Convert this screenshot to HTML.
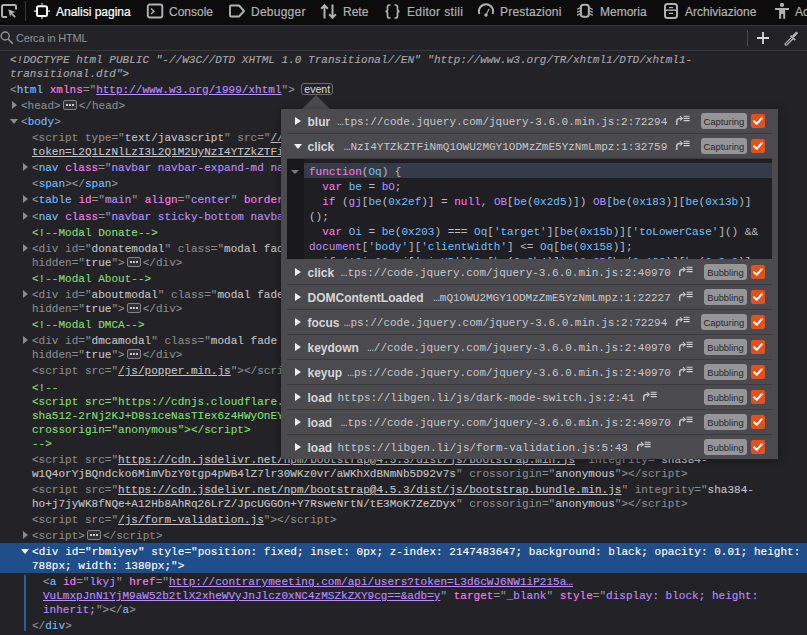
<!DOCTYPE html>
<html><head><meta charset="utf-8">
<style>
*{margin:0;padding:0;box-sizing:border-box}
html,body{width:807px;height:635px;overflow:hidden;background:#232327}
body{position:relative;font-family:"Liberation Sans",sans-serif}
#tb{position:absolute;left:0;top:0;width:807px;height:25px;background:#0c0c0d}
#tbline{position:absolute;left:0;top:25px;width:807px;height:1px;background:#38383d}
.tab{position:absolute;top:0;height:25px;line-height:25px;font-size:12px;color:#b1b1b3;white-space:nowrap;-webkit-text-stroke:0.2px currentColor}
.tab.sel{color:#fff}
.ico{position:absolute;top:0}
#sb{position:absolute;left:0;top:26px;width:807px;height:24px;background:#232327}
#sbline{position:absolute;left:0;top:50px;width:807px;height:1px;background:#38383d}
#search{position:absolute;left:16px;top:26px;height:24px;line-height:24px;font-size:11px;letter-spacing:-0.2px;color:#939395}
#tree{position:absolute;left:0;top:0;width:807px;height:635px;font-family:"Liberation Mono",monospace;font-size:11px;-webkit-text-stroke:0.12px currentColor;letter-spacing:0.022px}
.node{position:absolute;left:0;width:807px}
.selbg{position:absolute;left:0;top:543px;width:807px;height:30px;background:#204e8a}
.ln{position:absolute;height:14px;line-height:14px;white-space:pre;color:#939395}
.p{color:#939395}.t{color:#75bfff}.a{color:#ff7de9}.v{color:#b98eff}.c{color:#86de74}
.u{text-decoration:underline}
.dt{color:#a8a8ab;font-style:italic}
.dim .p,.dim .t,.dim .a{color:#8a8a8e}
.dim .v{color:#c2c2c6}
.sel .p,.sel .t,.sel .a,.sel .v{color:#fff}
.tw{position:absolute;top:4px;width:0;height:0}
.tw.r{border-top:4px solid transparent;border-bottom:4px solid transparent;border-left:5px solid #8a8a8e;top:3px;margin-left:2px}
.tw.d{border-left:4px solid transparent;border-right:4px solid transparent;border-top:5px solid #8a8a8e;top:5px;margin-left:0px}
.sel .tw.d{border-top-color:#fff}
.dots{display:inline-block;position:relative;width:14px;height:10px;border:1px solid #838387;border-radius:2px;vertical-align:0px;top:1px;margin:0 2px 0 2px;background:#313136}
.dots i{position:absolute;top:3px;width:2.2px;height:2.2px;background:#c8c8cc}
.dots i:nth-child(1){left:2px}.dots i:nth-child(2){left:5px}.dots i:nth-child(3){left:8px}
.evt{display:inline-block;position:relative;font-family:"Liberation Sans",sans-serif;font-size:10.5px;color:#d0d0d4;border:1px solid #6e6e72;border-radius:3px;height:12px;line-height:10px;padding:0 2px 0 2.5px;vertical-align:0px;top:0px;left:-0.6px}
#vline{position:absolute;left:24px;top:575px;width:2px;height:56px;background:#2a5da0}
/* popup */
#arrow{position:absolute;left:301.5px;top:95px;width:0;height:0;border-left:14px solid transparent;border-right:14px solid transparent;border-bottom:14px solid #4a4a4f}
#pop{position:absolute;left:281px;top:109px;width:497px;height:350px;background:#4a4a4f;border-left:1px solid #4a4a4f;box-shadow:0 1px 8px rgba(0,0,0,0.35);font-family:"Liberation Sans",sans-serif}
.row{position:absolute;left:0;width:497px;height:25px}
.rsep{position:absolute;left:5px;top:24px;width:485px;height:1px;background:#3a3a3f}
.ptw{position:absolute;width:0;height:0}
.ptw.r{left:13px;top:8px;border-top:4px solid transparent;border-bottom:4px solid transparent;border-left:6px solid #f0f0f2}
.ptw.d{left:12px;top:10px;border-left:4px solid transparent;border-right:4px solid transparent;border-top:5px solid #f0f0f2}
.ename{position:absolute;left:25.5px;top:1px;height:24px;line-height:24px;font-size:12px;font-weight:bold;color:#d6d6d9}
.url{position:absolute;top:1px;height:24px;line-height:24px;font-family:"Liberation Mono",monospace;font-size:11px;color:#c8c8cc;white-space:pre}
.jump{position:absolute;top:6px;width:15px;height:11px}
.jump svg{display:block}
.badge{position:absolute;top:4px;height:16px;line-height:18px;border-radius:3px;background:#969698;color:#262628;font-size:9.4px;text-align:center}
.cb{position:absolute;left:469px;top:5px;width:14px;height:14px;background:#e2511b;border-radius:2px}
.cb svg{display:block}
#code{position:absolute;left:5px;top:50px;width:485px;height:100px;background:#1f1f23;overflow:hidden}
#gutter{position:absolute;left:0;top:0;width:17px;height:100px;background:#18181a}
#gtw{position:absolute;left:4px;top:11px;width:0;height:0;border-left:4px solid transparent;border-right:4px solid transparent;border-top:4px solid #7a7a7e}
#hl{position:absolute;left:17px;top:4px;width:468px;height:15px;background:#353b48}
.cl{position:absolute;left:22px;height:15px;line-height:15px;font-family:"Liberation Mono",monospace;font-size:11px;white-space:pre;color:#d7d7db}
.k{color:#ff7de9}.b{color:#75bfff}.pu{color:#b98eff}.w{color:#bdbdc1}.s{color:#75bfff}
</style></head><body>
<div id="tb"></div>
<div id="tbline"></div>
<!-- picker -->
<svg class="ico" style="left:0;top:0" width="26" height="25" viewBox="0 0 26 25">
 <path d="M7 17 H3.5 Q2 17 2 15.5 V6.5 Q2 5 3.5 5 H14.5 Q16 5 16 6.5 V9.5" fill="none" stroke="#b1b1b3" stroke-width="2"/>
 <path d="M8.3 9.3 L15.3 12 L12.4 13 L15.8 16.4 L14.5 17.7 L11.1 14.3 L10.1 17.2 Z" fill="#b1b1b3"/>
 <rect x="25" y="1" width="1" height="20" fill="#38383d"/>
</svg>
<!-- inspector -->
<svg class="ico" style="left:33px;top:0" width="18" height="22" viewBox="0 0 18 22">
 <rect x="4" y="6.2" width="10" height="9.8" rx="1.5" fill="none" stroke="#fff" stroke-width="2"/>
 <path d="M9 3v2.2M9 17v2M1 11.1h2M15 11.1h2" stroke="#aaa" stroke-width="1.6"/>
</svg>
<div class="tab sel" style="left:56px">Analisi pagina</div>
<!-- console -->
<svg class="ico" style="left:146px;top:3px" width="18" height="16" viewBox="0 0 18 16">
 <rect x="1.8" y="1.5" width="14.5" height="13" rx="2" fill="none" stroke="#b1b1b3" stroke-width="1.9"/>
 <path d="M5 5.5 L8 8.2 L5 11" fill="none" stroke="#b1b1b3" stroke-width="1.4"/>
</svg>
<div class="tab" style="left:169px">Console</div>
<!-- debugger -->
<svg class="ico" style="left:228px;top:4px" width="18" height="14" viewBox="0 0 18 14">
 <path d="M2 2.5 Q2 1.5 3 1.5 H11 L16 7 L11 12.5 H3 Q2 12.5 2 11.5 Z" fill="none" stroke="#b1b1b3" stroke-width="1.9" stroke-linejoin="round"/>
</svg>
<div class="tab" style="left:251px;letter-spacing:0.25px">Debugger</div>
<!-- network -->
<svg class="ico" style="left:320px;top:3px" width="18" height="17" viewBox="0 0 18 17">
 <path d="M4.5 15.5V2.5M1.2 5.8L4.5 2.3L7.8 5.8M12.5 1.5v13M9.2 11.2L12.5 14.7L15.8 11.2" fill="none" stroke="#b1b1b3" stroke-width="2"/>
</svg>
<div class="tab" style="left:343px">Rete</div>
<!-- style editor -->
<svg class="ico" style="left:384px;top:4px" width="18" height="15" viewBox="0 0 18 15">
 <path d="M6.5 1 H5.5 Q3.5 1 3.5 3 V5.5 Q3.5 7.3 1.5 7.3 Q3.5 7.3 3.5 9.2 V12 Q3.5 14 5.5 14 H6.5" fill="none" stroke="#b1b1b3" stroke-width="1.7"/>
 <path d="M10.5 1 H11.5 Q13.5 1 13.5 3 V5.5 Q13.5 7.3 15.5 7.3 Q13.5 7.3 13.5 9.2 V12 Q13.5 14 11.5 14 H10.5" fill="none" stroke="#b1b1b3" stroke-width="1.7"/>
</svg>
<div class="tab" style="left:407px;letter-spacing:0.35px">Editor stili</div>
<!-- performance -->
<svg class="ico" style="left:477px;top:2px" width="18" height="17" viewBox="0 0 18 17">
 <path d="M2.5 12 A7.05 7.05 0 1 1 15.5 12" fill="none" stroke="#b1b1b3" stroke-width="2"/>
 <path d="M9 13 L11.9 7.3" stroke="#b1b1b3" stroke-width="1.1" stroke-linecap="round"/>
 <circle cx="9" cy="13" r="1.7" fill="#b1b1b3"/>
</svg>
<div class="tab" style="left:500px;letter-spacing:0.2px">Prestazioni</div>
<!-- memory -->
<svg class="ico" style="left:577px;top:3px" width="17" height="16" viewBox="0 0 17 16">
 <rect x="3.9" y="1.8" width="7.9" height="12" rx="2.5" fill="none" stroke="#b1b1b3" stroke-width="2"/>
 <path d="M3 4.9 L0.3 6.2M3 8 L0.3 9.1M3 10.9 L0.3 12.1M12.7 4.9 L15.4 6.2M12.7 8 L15.4 9.1M12.7 10.9 L15.4 12.1" stroke="#b1b1b3" stroke-width="1.2" stroke-linecap="round"/>
</svg>
<div class="tab" style="left:600px">Memoria</div>
<!-- storage -->
<svg class="ico" style="left:663px;top:3px" width="16" height="17" viewBox="0 0 16 17">
 <rect x="2" y="1" width="12" height="13.9" rx="2.5" fill="none" stroke="#b1b1b3" stroke-width="2"/>
 <path d="M2 7.2h12" stroke="#b1b1b3" stroke-width="1.4"/>
 <path d="M6 4.6h4M6 10.4h4" stroke="#b1b1b3" stroke-width="1.2"/>
</svg>
<div class="tab" style="left:685px">Archiviazione</div>
<!-- accessibility -->
<svg class="ico" style="left:774px;top:3px" width="16" height="17" viewBox="0 0 16 17">
 <circle cx="8" cy="1.9" r="2.1" fill="#b1b1b3"/>
 <path d="M1 5h14v2.1H11.2v8.7H9.2V11H7.2v4.8H5.1V7.1H1z" fill="#b1b1b3"/>
</svg>
<div class="tab" style="left:795px">Accessibilità</div>

<div id="tbline2" style="position:absolute;left:0;top:25px;width:807px;height:1px;background:#38383d"></div>
<div id="sb"></div>
<div id="sbline"></div>
<svg class="ico" style="left:0;top:30px" width="15" height="16" viewBox="0 0 15 16">
 <circle cx="5.2" cy="6" r="4" fill="none" stroke="#939395" stroke-width="1.4"/>
 <path d="M8.2 9 L12.8 13.8" stroke="#939395" stroke-width="1.6"/>
</svg>
<div id="search">Cerca in HTML</div>
<div style="position:absolute;left:747px;top:30px;width:1px;height:16px;background:#4a4a4f"></div>
<svg class="ico" style="left:756px;top:31px" width="14" height="14" viewBox="0 0 14 14">
 <path d="M7 1v12M1 7h12" stroke="#d7d7db" stroke-width="1.8"/>
</svg>
<svg class="ico" style="left:783px;top:30px" width="16" height="16" viewBox="0 0 16 16">
 <path d="M9 6.8 L2.3 13.5 Q1.8 14.6 2.5 15 Q3.2 15.4 4.1 14.7 L10.8 8" fill="none" stroke="#b1b1b3" stroke-width="1.2"/>
 <path d="M7.6 5.6 L12.2 10.2" stroke="#b1b1b3" stroke-width="1.8"/>
 <path d="M9.6 5.6 L12 3.2 Q13.3 1.6 14.2 2.4 Q15 3.3 13.4 4.6 L11 7 Z" fill="#b1b1b3" stroke="#b1b1b3" stroke-width="1"/>
</svg>

<div id="tree">
<div class="node" style="top:51.500px;height:30.125px">
<div class="ln" style="top:1px;left:10px"><span class="dt">&lt;!DOCTYPE html PUBLIC &quot;-//W3C//DTD XHTML 1.0 Transitional//EN&quot; &quot;http://www.w3.org/TR/xhtml1/DTD/xhtml1-</span></div>
<div class="ln" style="top:15px;left:10px"><span class="dt">transitional.dtd&quot;&gt;</span></div>
</div>
<div class="node" style="top:81.625px;height:16.125px">
<div class="ln" style="top:1px;left:10px"><span class="p">&lt;</span><span class="t">html</span> <span class="a">xmlns</span><span class="p">=&quot;</span><span class="v u">http://www.w3.org/1999/xhtml</span><span class="p">&quot;&gt;</span> <span class="evt">event</span></div>
</div>
<div class="node dim" style="top:97.750px;height:16.125px">
<span class="tw r" style="left:10px"></span>
<div class="ln" style="top:1px;left:21px"><span class="p">&lt;head&gt;</span><span class="dots"><i></i><i></i><i></i></span><span class="p">&lt;/head&gt;</span></div>
</div>
<div class="node" style="top:113.875px;height:16.125px">
<span class="tw d" style="left:10px"></span>
<div class="ln" style="top:1px;left:21px"><span class="p">&lt;</span><span class="t">body</span><span class="p">&gt;</span></div>
</div>
<div class="node dim" style="top:130.000px;height:30.125px">
<div class="ln" style="top:1px;left:32px"><span class="p">&lt;script type=&quot;</span><span class="v">text/javascript</span><span class="p">&quot; src=&quot;</span><span class="v u">//libgen.li/ads.php?</span></div>
<div class="ln" style="top:15px;left:32px"><span class="v u">token=L2Q1LzNlLzI3L2Q1M2UyNzI4YTZkZTFiNmQ1OWU2MGY1ODMzZmE5</span></div>
</div>
<div class="node" style="top:160.125px;height:16.125px">
<span class="tw r" style="left:21px"></span>
<div class="ln" style="top:1px;left:32px"><span class="p">&lt;</span><span class="t">nav</span> <span class="a">class</span><span class="p">=&quot;</span><span class="v">navbar navbar-expand-md navbar-dark</span></div>
</div>
<div class="node" style="top:176.250px;height:16.125px">
<div class="ln" style="top:1px;left:32px"><span class="p">&lt;</span><span class="t">span</span><span class="p">&gt;&lt;/</span><span class="t">span</span><span class="p">&gt;</span></div>
</div>
<div class="node" style="top:192.375px;height:16.125px">
<span class="tw r" style="left:21px"></span>
<div class="ln" style="top:1px;left:32px"><span class="p">&lt;</span><span class="t">table</span> <span class="a">id</span><span class="p">=&quot;</span><span class="v">main</span><span class="p">&quot;</span> <span class="a">align</span><span class="p">=&quot;</span><span class="v">center</span><span class="p">&quot;</span> <span class="a">border</span><span class="p">=&quot;</span></div>
</div>
<div class="node" style="top:208.500px;height:16.125px">
<span class="tw r" style="left:21px"></span>
<div class="ln" style="top:1px;left:32px"><span class="p">&lt;</span><span class="t">nav</span> <span class="a">class</span><span class="p">=&quot;</span><span class="v">navbar sticky-bottom navbar-dark</span></div>
</div>
<div class="node" style="top:224.625px;height:16.125px">
<div class="ln" style="top:1px;left:32px"><span class="c">&lt;!--Modal Donate--&gt;</span></div>
</div>
<div class="node dim" style="top:240.750px;height:30.125px">
<span class="tw r" style="left:21px"></span>
<div class="ln" style="top:1px;left:32px"><span class="p">&lt;div id=&quot;</span><span class="v">donatemodal</span><span class="p">&quot; class=&quot;</span><span class="v">modal fade show</span></div>
<div class="ln" style="top:15px;left:32px"><span class="p">hidden=&quot;</span><span class="v">true</span><span class="p">&quot;&gt;</span><span class="dots"><i></i><i></i><i></i></span><span class="p">&lt;/div&gt;</span></div>
</div>
<div class="node" style="top:270.875px;height:16.125px">
<div class="ln" style="top:1px;left:32px"><span class="c">&lt;!--Modal About--&gt;</span></div>
</div>
<div class="node dim" style="top:287.000px;height:30.125px">
<span class="tw r" style="left:21px"></span>
<div class="ln" style="top:1px;left:32px"><span class="p">&lt;div id=&quot;</span><span class="v">aboutmodal</span><span class="p">&quot; class=&quot;</span><span class="v">modal fade show</span></div>
<div class="ln" style="top:15px;left:32px"><span class="p">hidden=&quot;</span><span class="v">true</span><span class="p">&quot;&gt;</span><span class="dots"><i></i><i></i><i></i></span><span class="p">&lt;/div&gt;</span></div>
</div>
<div class="node" style="top:317.125px;height:16.125px">
<div class="ln" style="top:1px;left:32px"><span class="c">&lt;!--Modal DMCA--&gt;</span></div>
</div>
<div class="node dim" style="top:333.250px;height:30.125px">
<span class="tw r" style="left:21px"></span>
<div class="ln" style="top:1px;left:32px"><span class="p">&lt;div id=&quot;</span><span class="v">dmcamodal</span><span class="p">&quot; class=&quot;</span><span class="v">modal fade show</span></div>
<div class="ln" style="top:15px;left:32px"><span class="p">hidden=&quot;</span><span class="v">true</span><span class="p">&quot;&gt;</span><span class="dots"><i></i><i></i><i></i></span><span class="p">&lt;/div&gt;</span></div>
</div>
<div class="node dim" style="top:363.375px;height:16.125px">
<div class="ln" style="top:1px;left:32px"><span class="p">&lt;script src=&quot;</span><span class="v u">/js/popper.min.js</span><span class="p">&quot;&gt;&lt;/script&gt;</span></div>
</div>
<div class="node" style="top:379.500px;height:72.125px">
<div class="ln" style="top:1px;left:32px"><span class="c">&lt;!--</span></div>
<div class="ln" style="top:15px;left:32px"><span class="c">&lt;script src=&quot;https://cdnjs.cloudflare.com/ajax</span></div>
<div class="ln" style="top:29px;left:32px"><span class="c">sha512-2rNj2KJ+D8s1ceNasTIex6z4HWyOnEYLVC3F</span></div>
<div class="ln" style="top:43px;left:32px"><span class="c">crossorigin=&quot;anonymous&quot;&gt;&lt;/script&gt;</span></div>
<div class="ln" style="top:57px;left:32px"><span class="c">--&gt;</span></div>
</div>
<div class="node dim" style="top:451.625px;height:30.125px">
<div class="ln" style="top:1px;left:32px"><span class="p">&lt;script src=&quot;</span><span class="v u">https://cdn.jsdelivr.net/npm/bootstrap@4.5.3/dist/js/bootstrap.min.js</span><span class="p">&quot; integrity=&quot;</span><span class="v">sha384-</span></div>
<div class="ln" style="top:15px;left:32px"><span class="v">w1Q4orYjBQndcko6MimVbzY0tgp4pWB4lZ7lr30WKz0vr/aWKhXdBNmNb5D92v7s</span><span class="p">&quot; crossorigin=&quot;</span><span class="v">anonymous</span><span class="p">&quot;&gt;&lt;/script&gt;</span></div>
</div>
<div class="node dim" style="top:481.750px;height:30.125px">
<div class="ln" style="top:1px;left:32px"><span class="p">&lt;script src=&quot;</span><span class="v u">https://cdn.jsdelivr.net/npm/bootstrap@4.5.3/dist/js/bootstrap.bundle.min.js</span><span class="p">&quot; integrity=&quot;</span><span class="v">sha384-</span></div>
<div class="ln" style="top:15px;left:32px"><span class="v">ho+j7jyWK8fNQe+A12Hb8AhRq26LrZ/JpcUGGOn+Y7RsweNrtN/tE3MoK7ZeZDyx</span><span class="p">&quot; crossorigin=&quot;</span><span class="v">anonymous</span><span class="p">&quot;&gt;&lt;/script&gt;</span></div>
</div>
<div class="node dim" style="top:511.875px;height:16.125px">
<div class="ln" style="top:1px;left:32px"><span class="p">&lt;script src=&quot;</span><span class="v u">/js/form-validation.js</span><span class="p">&quot;&gt;&lt;/script&gt;</span></div>
</div>
<div class="node dim" style="top:528.000px;height:16.125px">
<span class="tw r" style="left:21px"></span>
<div class="ln" style="top:1px;left:32px"><span class="p">&lt;script&gt;</span><span class="dots"><i></i><i></i><i></i></span><span class="p">&lt;/script&gt;</span></div>
</div>
<div class="selbg"></div>
<div class="node sel" style="top:544.125px;height:30.125px">
<span class="tw d" style="left:21px"></span>
<div class="ln" style="top:1px;left:32px"><span class="p">&lt;</span><span class="t">div</span> <span class="a">id</span><span class="p">=&quot;</span><span class="v">rbmiyev</span><span class="p">&quot;</span> <span class="a">style</span><span class="p">=&quot;</span><span class="v">position: fixed; inset: 0px; z-index: 2147483647; background: black; opacity: 0.01; height:</span></div>
<div class="ln" style="top:15px;left:32px"><span class="v">788px; width: 1380px;</span><span class="p">&quot;&gt;</span></div>
</div>
<div class="node" style="top:574.250px;height:44.125px">
<div class="ln" style="top:1px;left:43px"><span class="p">&lt;</span><span class="t">a</span> <span class="a">id</span><span class="p">=&quot;</span><span class="v">lkyj</span><span class="p">&quot;</span> <span class="a">href</span><span class="p">=&quot;</span><span class="v u">http://contrarymeeting.com/api/users?token=L3d6cWJ6NW1iP215a…</span></div>
<div class="ln" style="top:15px;left:43px"><span class="v u">VuLmxpJnN1YjM9aW52b2tlX2xheWVyJnJlcz0xNC4zMSZkZXY9cg==&amp;adb=y</span><span class="p">&quot;</span> <span class="a">target</span><span class="p">=&quot;</span><span class="v">_blank</span><span class="p">&quot;</span> <span class="a">style</span><span class="p">=&quot;</span><span class="v">display: block; height:</span></div>
<div class="ln" style="top:29px;left:43px"><span class="v">inherit;</span><span class="p">&quot;&gt;&lt;/</span><span class="t">a</span><span class="p">&gt;</span></div>
</div>
<div class="node" style="top:618.375px;height:16.125px">
<div class="ln" style="top:1px;left:32px"><span class="p">&lt;/</span><span class="t">div</span><span class="p">&gt;</span></div>
</div>
<div id="vline"></div>
</div>

<div id="arrow"></div>
<div id="pop">
<div class="row" style="top:0px"><span class="ptw r"></span><span class="ename">blur</span><span class="url" style="left:55.2px">…tps://code.jquery.com/jquery-3.6.0.min.js:2:72294</span><span class="jump" style="left:392.7px"><svg width="16" height="11" viewBox="0 0 16 11"><path d="M1.7 10 V6.3 Q1.7 3.4 4.6 3.4 H7" fill="none" stroke="#c4c4c8" stroke-width="1.5"/><path d="M5 1.2 L7.3 3.4 L5 5.6" fill="none" stroke="#c4c4c8" stroke-width="1.1"/><path d="M8.6 1.3h6M8.6 3.4h6M8.6 5.6h6" stroke="#d0d0d4" stroke-width="1.1"/></svg></span><span class="badge" style="left:418.7px;width:46.3px">Capturing</span><span class="cb"><svg width="14" height="14" viewBox="0 0 14 14"><path d="M3.2 7.3 L5.8 9.9 L10.8 4.2" fill="none" stroke="#fff" stroke-width="2" stroke-linecap="round" stroke-linejoin="round"/></svg></span><div class="rsep"></div></div>
<div class="row" style="top:25px"><span class="ptw d"></span><span class="ename">click</span><span class="url" style="left:61.8px">…NzI4YTZkZTFiNmQ1OWU2MGY1ODMzZmE5YzNmLmpz:1:32759</span><span class="jump" style="left:392.7px"><svg width="16" height="11" viewBox="0 0 16 11"><path d="M1.7 10 V6.3 Q1.7 3.4 4.6 3.4 H7" fill="none" stroke="#c4c4c8" stroke-width="1.5"/><path d="M5 1.2 L7.3 3.4 L5 5.6" fill="none" stroke="#c4c4c8" stroke-width="1.1"/><path d="M8.6 1.3h6M8.6 3.4h6M8.6 5.6h6" stroke="#d0d0d4" stroke-width="1.1"/></svg></span><span class="badge" style="left:418.7px;width:46.3px">Capturing</span><span class="cb"><svg width="14" height="14" viewBox="0 0 14 14"><path d="M3.2 7.3 L5.8 9.9 L10.8 4.2" fill="none" stroke="#fff" stroke-width="2" stroke-linecap="round" stroke-linejoin="round"/></svg></span><div class="rsep"></div></div>
<div class="row" style="top:151px"><span class="ptw r"></span><span class="ename">click</span><span class="url" style="left:58.8px">…tps://code.jquery.com/jquery-3.6.0.min.js:2:40970</span><span class="jump" style="left:396.3px"><svg width="16" height="11" viewBox="0 0 16 11"><path d="M1.7 10 V6.3 Q1.7 3.4 4.6 3.4 H7" fill="none" stroke="#c4c4c8" stroke-width="1.5"/><path d="M5 1.2 L7.3 3.4 L5 5.6" fill="none" stroke="#c4c4c8" stroke-width="1.1"/><path d="M8.6 1.3h6M8.6 3.4h6M8.6 5.6h6" stroke="#d0d0d4" stroke-width="1.1"/></svg></span><span class="badge" style="left:422.3px;width:42.3px">Bubbling</span><span class="cb"><svg width="14" height="14" viewBox="0 0 14 14"><path d="M3.2 7.3 L5.8 9.9 L10.8 4.2" fill="none" stroke="#fff" stroke-width="2" stroke-linecap="round" stroke-linejoin="round"/></svg></span><div class="rsep"></div></div>
<div class="row" style="top:176px"><span class="ptw r"></span><span class="ename">DOMContentLoaded</span><span class="url" style="left:151.2px">…mQ1OWU2MGY1ODMzZmE5YzNmLmpz:1:22227</span><span class="jump" style="left:396.3px"><svg width="16" height="11" viewBox="0 0 16 11"><path d="M1.7 10 V6.3 Q1.7 3.4 4.6 3.4 H7" fill="none" stroke="#c4c4c8" stroke-width="1.5"/><path d="M5 1.2 L7.3 3.4 L5 5.6" fill="none" stroke="#c4c4c8" stroke-width="1.1"/><path d="M8.6 1.3h6M8.6 3.4h6M8.6 5.6h6" stroke="#d0d0d4" stroke-width="1.1"/></svg></span><span class="badge" style="left:422.3px;width:42.3px">Bubbling</span><span class="cb"><svg width="14" height="14" viewBox="0 0 14 14"><path d="M3.2 7.3 L5.8 9.9 L10.8 4.2" fill="none" stroke="#fff" stroke-width="2" stroke-linecap="round" stroke-linejoin="round"/></svg></span><div class="rsep"></div></div>
<div class="row" style="top:201px"><span class="ptw r"></span><span class="ename">focus</span><span class="url" style="left:61.8px">…ps://code.jquery.com/jquery-3.6.0.min.js:2:72294</span><span class="jump" style="left:392.7px"><svg width="16" height="11" viewBox="0 0 16 11"><path d="M1.7 10 V6.3 Q1.7 3.4 4.6 3.4 H7" fill="none" stroke="#c4c4c8" stroke-width="1.5"/><path d="M5 1.2 L7.3 3.4 L5 5.6" fill="none" stroke="#c4c4c8" stroke-width="1.1"/><path d="M8.6 1.3h6M8.6 3.4h6M8.6 5.6h6" stroke="#d0d0d4" stroke-width="1.1"/></svg></span><span class="badge" style="left:418.7px;width:46.3px">Capturing</span><span class="cb"><svg width="14" height="14" viewBox="0 0 14 14"><path d="M3.2 7.3 L5.8 9.9 L10.8 4.2" fill="none" stroke="#fff" stroke-width="2" stroke-linecap="round" stroke-linejoin="round"/></svg></span><div class="rsep"></div></div>
<div class="row" style="top:226px"><span class="ptw r"></span><span class="ename">keydown</span><span class="url" style="left:85.2px">…//code.jquery.com/jquery-3.6.0.min.js:2:40970</span><span class="jump" style="left:396.3px"><svg width="16" height="11" viewBox="0 0 16 11"><path d="M1.7 10 V6.3 Q1.7 3.4 4.6 3.4 H7" fill="none" stroke="#c4c4c8" stroke-width="1.5"/><path d="M5 1.2 L7.3 3.4 L5 5.6" fill="none" stroke="#c4c4c8" stroke-width="1.1"/><path d="M8.6 1.3h6M8.6 3.4h6M8.6 5.6h6" stroke="#d0d0d4" stroke-width="1.1"/></svg></span><span class="badge" style="left:422.3px;width:42.3px">Bubbling</span><span class="cb"><svg width="14" height="14" viewBox="0 0 14 14"><path d="M3.2 7.3 L5.8 9.9 L10.8 4.2" fill="none" stroke="#fff" stroke-width="2" stroke-linecap="round" stroke-linejoin="round"/></svg></span><div class="rsep"></div></div>
<div class="row" style="top:251px"><span class="ptw r"></span><span class="ename">keyup</span><span class="url" style="left:65.4px">…ps://code.jquery.com/jquery-3.6.0.min.js:2:40970</span><span class="jump" style="left:396.3px"><svg width="16" height="11" viewBox="0 0 16 11"><path d="M1.7 10 V6.3 Q1.7 3.4 4.6 3.4 H7" fill="none" stroke="#c4c4c8" stroke-width="1.5"/><path d="M5 1.2 L7.3 3.4 L5 5.6" fill="none" stroke="#c4c4c8" stroke-width="1.1"/><path d="M8.6 1.3h6M8.6 3.4h6M8.6 5.6h6" stroke="#d0d0d4" stroke-width="1.1"/></svg></span><span class="badge" style="left:422.3px;width:42.3px">Bubbling</span><span class="cb"><svg width="14" height="14" viewBox="0 0 14 14"><path d="M3.2 7.3 L5.8 9.9 L10.8 4.2" fill="none" stroke="#fff" stroke-width="2" stroke-linecap="round" stroke-linejoin="round"/></svg></span><div class="rsep"></div></div>
<div class="row" style="top:276px"><span class="ptw r"></span><span class="ename">load</span><span class="url" style="left:55.5px">https://libgen.li/js/dark-mode-switch.js:2:41</span><span class="jump" style="left:360.3px"><svg width="16" height="11" viewBox="0 0 16 11"><path d="M1.7 10 V6.3 Q1.7 3.4 4.6 3.4 H7" fill="none" stroke="#c4c4c8" stroke-width="1.5"/><path d="M5 1.2 L7.3 3.4 L5 5.6" fill="none" stroke="#c4c4c8" stroke-width="1.1"/><path d="M8.6 1.3h6M8.6 3.4h6M8.6 5.6h6" stroke="#d0d0d4" stroke-width="1.1"/></svg></span><span class="badge" style="left:422.3px;width:42.3px">Bubbling</span><span class="cb"><svg width="14" height="14" viewBox="0 0 14 14"><path d="M3.2 7.3 L5.8 9.9 L10.8 4.2" fill="none" stroke="#fff" stroke-width="2" stroke-linecap="round" stroke-linejoin="round"/></svg></span><div class="rsep"></div></div>
<div class="row" style="top:301px"><span class="ptw r"></span><span class="ename">load</span><span class="url" style="left:58.8px">…tps://code.jquery.com/jquery-3.6.0.min.js:2:40970</span><span class="jump" style="left:396.3px"><svg width="16" height="11" viewBox="0 0 16 11"><path d="M1.7 10 V6.3 Q1.7 3.4 4.6 3.4 H7" fill="none" stroke="#c4c4c8" stroke-width="1.5"/><path d="M5 1.2 L7.3 3.4 L5 5.6" fill="none" stroke="#c4c4c8" stroke-width="1.1"/><path d="M8.6 1.3h6M8.6 3.4h6M8.6 5.6h6" stroke="#d0d0d4" stroke-width="1.1"/></svg></span><span class="badge" style="left:422.3px;width:42.3px">Bubbling</span><span class="cb"><svg width="14" height="14" viewBox="0 0 14 14"><path d="M3.2 7.3 L5.8 9.9 L10.8 4.2" fill="none" stroke="#fff" stroke-width="2" stroke-linecap="round" stroke-linejoin="round"/></svg></span><div class="rsep"></div></div>
<div class="row" style="top:326px"><span class="ptw r"></span><span class="ename">load</span><span class="url" style="left:55.5px">https://libgen.li/js/form-validation.js:5:43</span><span class="jump" style="left:353.7px"><svg width="16" height="11" viewBox="0 0 16 11"><path d="M1.7 10 V6.3 Q1.7 3.4 4.6 3.4 H7" fill="none" stroke="#c4c4c8" stroke-width="1.5"/><path d="M5 1.2 L7.3 3.4 L5 5.6" fill="none" stroke="#c4c4c8" stroke-width="1.1"/><path d="M8.6 1.3h6M8.6 3.4h6M8.6 5.6h6" stroke="#d0d0d4" stroke-width="1.1"/></svg></span><span class="badge" style="left:422.3px;width:42.3px">Bubbling</span><span class="cb"><svg width="14" height="14" viewBox="0 0 14 14"><path d="M3.2 7.3 L5.8 9.9 L10.8 4.2" fill="none" stroke="#fff" stroke-width="2" stroke-linecap="round" stroke-linejoin="round"/></svg></span></div>
<div id="code"><div id="gutter"><div id="gtw"></div></div><div id="hl"></div><div class="cl" style="top:6px"><span class="k">function</span><span class="w">(</span><span class="b">Oq</span><span class="w">) {</span></div><div class="cl" style="top:21px">  <span class="k">var</span> <span class="b">be</span><span class="w"> = </span><span class="pu">bO</span><span class="w">;</span></div><div class="cl" style="top:36px">  <span class="k">if</span><span class="w"> (</span><span class="pu">gj</span><span class="w">[</span><span class="b">be</span><span class="w">(</span><span class="b">0x2ef</span><span class="w">)] = </span><span class="k">null</span><span class="w">, </span><span class="pu">OB</span><span class="w">[</span><span class="b">be</span><span class="w">(</span><span class="b">0x2d5</span><span class="w">)]) </span><span class="pu">OB</span><span class="w">[</span><span class="b">be</span><span class="w">(</span><span class="b">0x183</span><span class="w">)][</span><span class="b">be</span><span class="w">(</span><span class="b">0x13b</span><span class="w">)]</span></div><div class="cl" style="top:51px"><span class="w">();</span></div><div class="cl" style="top:66px">  <span class="k">var</span> <span class="b">Oi</span><span class="w"> = </span><span class="b">be</span><span class="w">(</span><span class="b">0x203</span><span class="w">) === </span><span class="b">Oq</span><span class="w">[</span><span class="s">&#x27;target&#x27;</span><span class="w">][</span><span class="b">be</span><span class="w">(</span><span class="b">0x15b</span><span class="w">)][</span><span class="s">&#x27;toLowerCase&#x27;</span><span class="w">]() &amp;&amp;</span></div><div class="cl" style="top:81px"><span class="pu">document</span><span class="w">[</span><span class="s">&#x27;body&#x27;</span><span class="w">][</span><span class="s">&#x27;clientWidth&#x27;</span><span class="w">] &lt;= </span><span class="b">Oq</span><span class="w">[</span><span class="b">be</span><span class="w">(</span><span class="b">0x158</span><span class="w">)];</span></div><div class="cl" style="top:96px">  <span class="k">if</span><span class="w"> (!</span><span class="b">Oi</span><span class="w"> &amp;&amp; </span><span class="pu">gj</span><span class="w">[</span><span class="s">&#x27;_isXB&#x27;</span><span class="w">](</span><span class="b">Oq</span><span class="w">[</span><span class="b">be</span><span class="w">(</span><span class="b">0x2b4</span><span class="w">)]) &amp;&amp; </span><span class="pu">OB</span><span class="w">[</span><span class="b">be</span><span class="w">(</span><span class="b">0x183</span><span class="w">)][</span><span class="b">be</span><span class="w">(</span><span class="b">0x2e0</span><span class="w">)]</span></div></div>
</div>
</body></html>
